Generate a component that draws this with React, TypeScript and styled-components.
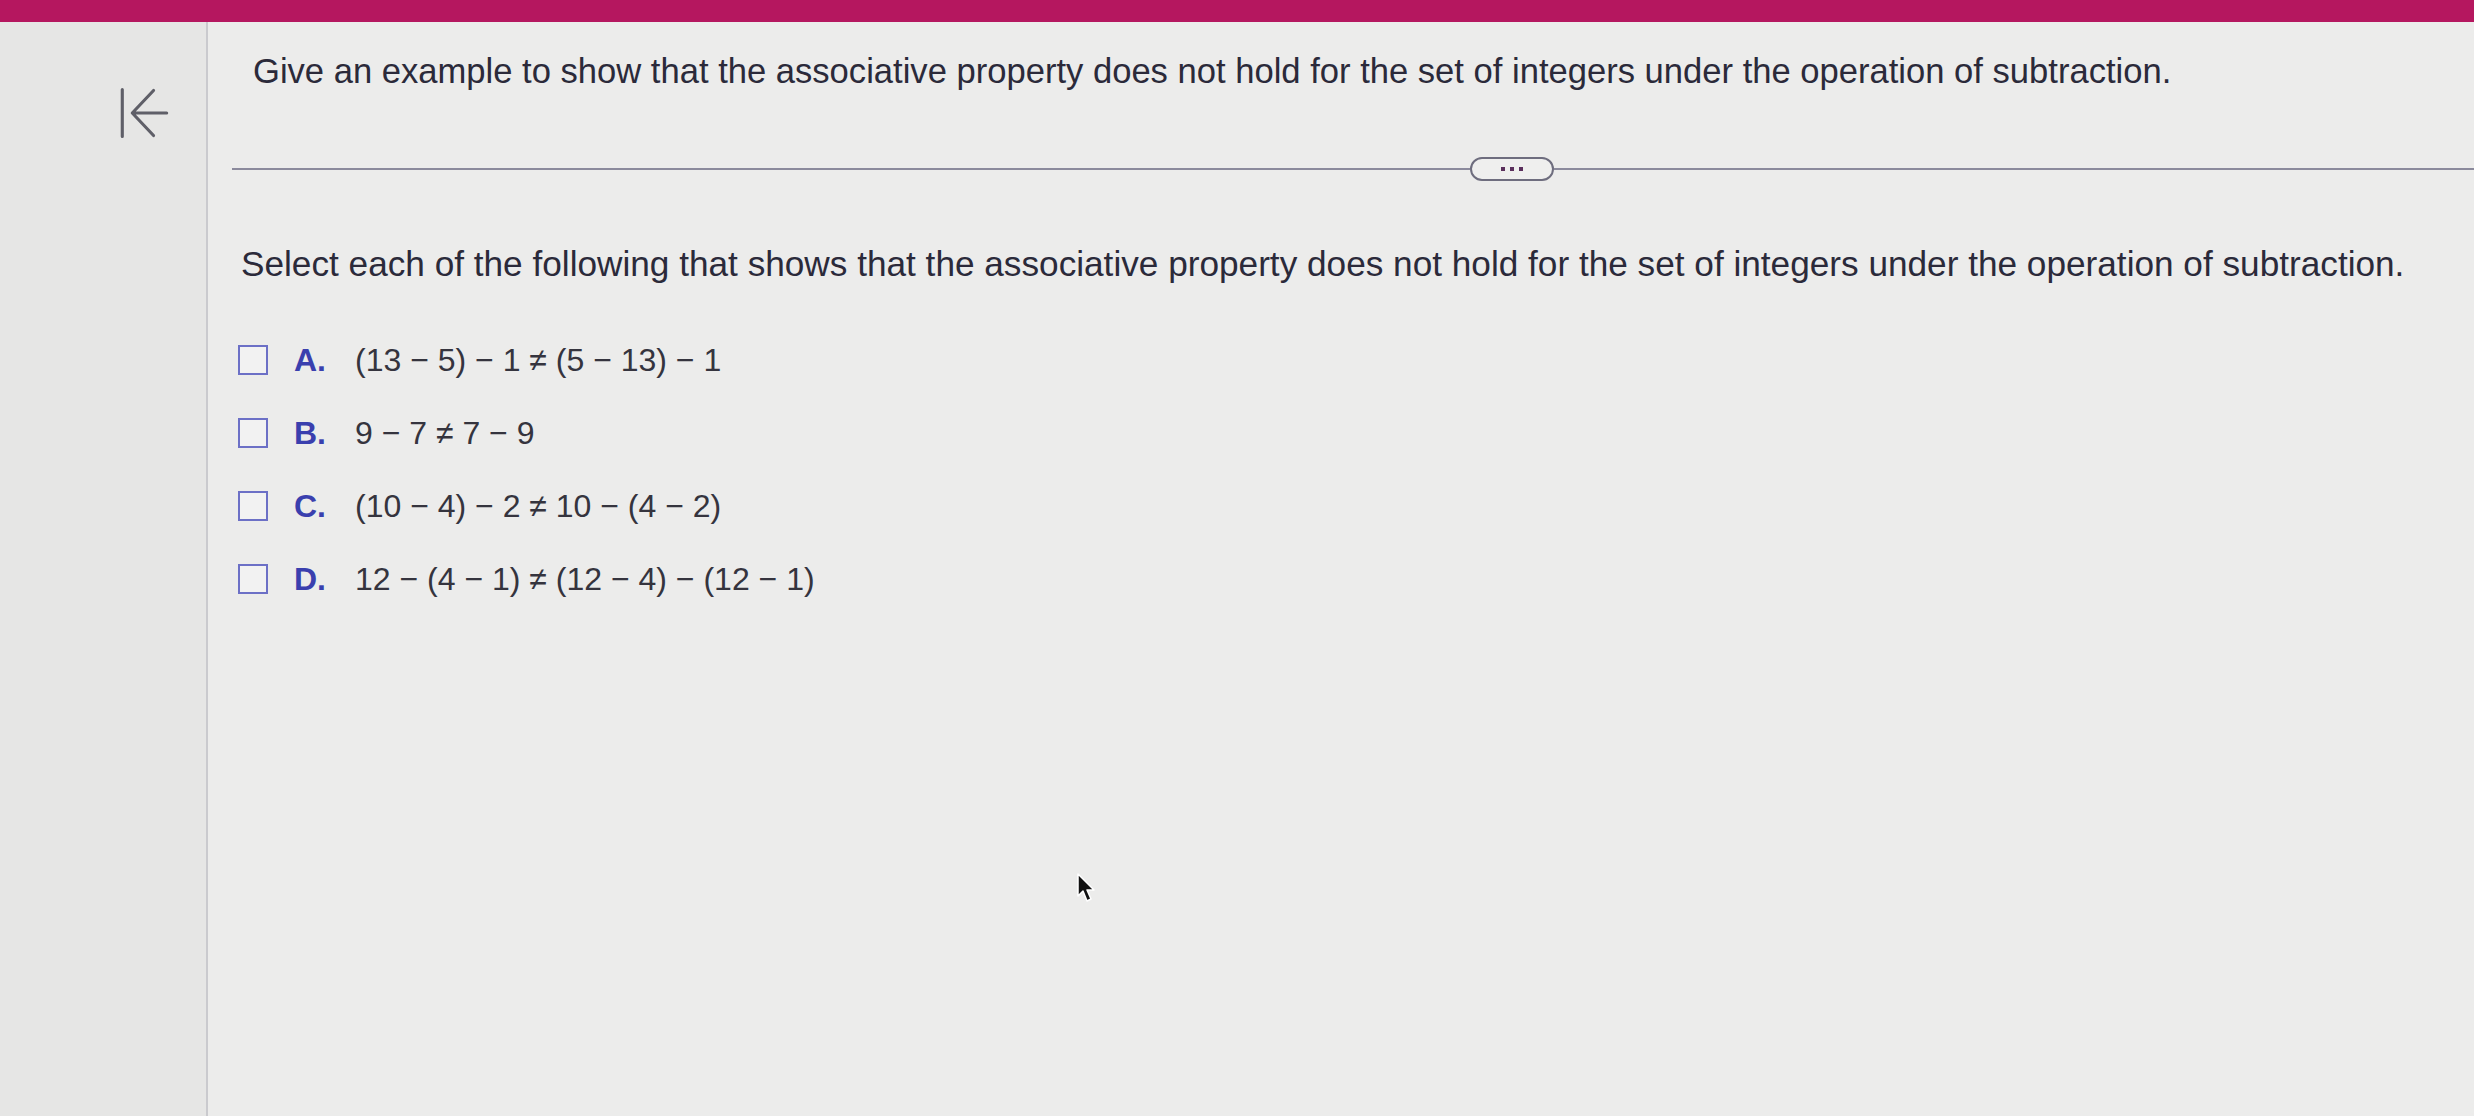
import React from "react";
import styled, { createGlobalStyle } from "styled-components";

const GlobalStyle = createGlobalStyle`
  html, body {
    margin: 0;
    padding: 0;
    background: #ebebea;
    font-family: "Liberation Sans", Arial, sans-serif;
  }
`;

const Page = styled.div`
  position: relative;
  min-height: 1116px;
  display: flex;
  flex-direction: column;
  overflow: hidden;
`;

const TopBar = styled.div`
  height: 22px;
  flex: 0 0 22px;
  background: #b5175f;
`;

const Body = styled.div`
  flex: 1;
  display: flex;
`;

const Sidebar = styled.aside`
  width: 208px;
  flex: 0 0 208px;
  background: #e6e6e5;
  border-right: 2px solid #cacace;
  padding: 66px 0 0 114px;
  box-sizing: border-box;
`;

const BackButton = styled.button`
  display: block;
  padding: 0;
  border: 0;
  background: none;
  cursor: pointer;
  color: #5f5f68;
`;

const Main = styled.main`
  flex: 1;
  padding-top: 29px;
  background: #ececeb;
`;

const Title = styled.h1`
  margin: 0 0 0 45px;
  font-size: 34.6px;
  line-height: 40px;
  font-weight: 400;
  color: #2b2a3a;
`;

const Divider = styled.div`
  display: flex;
  align-items: center;
  margin: 66px 0 0 24px;
  height: 24px;
`;

const Rule = styled.div<{ $grow?: boolean; $width?: number }>`
  height: 2px;
  background: #8b8a9c;
  flex: ${(p) => (p.$grow ? "1" : `0 0 ${p.$width}px`)};
`;

const MoreButton = styled.button`
  width: 84px;
  height: 24px;
  box-sizing: border-box;
  border: 2px solid #6e6d7e;
  border-radius: 12px;
  background: #efefee;
  display: flex;
  align-items: center;
  justify-content: center;
  gap: 5px;
  padding: 0;
`;

const Dot = styled.span`
  width: 4px;
  height: 4px;
  background: #5a2f5c;
`;

const Prompt = styled.p`
  margin: 63px 0 0 33px;
  font-size: 35.2px;
  line-height: 40px;
  color: #2b2a3a;
`;

const Options = styled.ul`
  list-style: none;
  margin: 56px 0 0 30px;
  padding: 0;
  display: flex;
  flex-direction: column;
  gap: 33px;
`;

const Option = styled.li`
  display: flex;
  align-items: center;
  height: 40px;
`;

const Box = styled.span`
  width: 30px;
  height: 30px;
  box-sizing: border-box;
  border: 2px solid #6c70c6;
  background: #f2f2f2;
  margin-right: 26px;
`;

const Letter = styled.span`
  width: 61px;
  font-size: 32px;
  font-weight: 700;
  color: #3a3fae;
`;

const Expr = styled.span`
  font-size: 32px;
  color: #35343e;
`;

const Cursor = styled.svg`
  position: absolute;
  left: 1076px;
  top: 872px;
`;

const options = [
  { letter: "A.", expr: "(13 − 5) − 1 ≠ (5 − 13) − 1" },
  { letter: "B.", expr: "9 − 7 ≠ 7 − 9" },
  { letter: "C.", expr: "(10 − 4) − 2 ≠ 10 − (4 − 2)" },
  { letter: "D.", expr: "12 − (4 − 1) ≠ (12 − 4) − (12 − 1)" },
];

function BackIcon() {
  return (
    <svg width="60" height="50" viewBox="0 0 155 160" fill="none">
      <path
        d="M8 5V155M40 80H150M108 8L40 80L108 152"
        stroke="currentColor"
        strokeWidth="10"
        strokeLinecap="round"
        strokeLinejoin="round"
      />
    </svg>
  );
}

export default function App() {
  return (
    <Page>
      <GlobalStyle />
      <TopBar />
      <Body>
        <Sidebar>
          <BackButton aria-label="Back">
            <BackIcon />
          </BackButton>
        </Sidebar>
        <Main>
          <Title>
            Give an example to show that the associative property does not hold for the set of
            integers under the operation of subtraction.
          </Title>
          <Divider>
            <Rule $width={1238} />
            <MoreButton aria-label="More">
              <Dot />
              <Dot />
              <Dot />
            </MoreButton>
            <Rule $grow />
          </Divider>
          <Prompt>
            Select each of the following that shows that the associative property does not hold
            for the set of integers under the operation of subtraction.
          </Prompt>
          <Options>
            {options.map((o) => (
              <Option key={o.letter}>
                <Box />
                <Letter>{o.letter}</Letter>
                <Expr>{o.expr}</Expr>
              </Option>
            ))}
          </Options>
        </Main>
      </Body>
      <Cursor width="22" height="32" viewBox="0 0 22 32">
        <path
          d="M2 2L2 24L7 19L11 29L15 27L11 18L18 18Z"
          fill="#111"
          stroke="#fff"
          strokeWidth="1.5"
          strokeLinejoin="round"
        />
      </Cursor>
    </Page>
  );
}
